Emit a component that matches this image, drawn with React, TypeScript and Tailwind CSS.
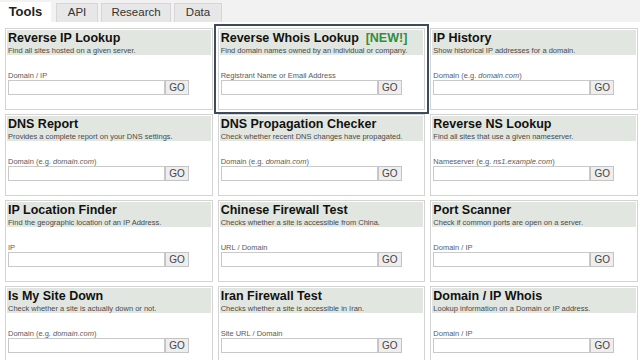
import React from 'react';

type Tool = {
  title: string;
  isNew?: boolean;
  desc: string;
  label: React.ReactNode;
  highlight?: boolean;
};

const eg = (v: string) => (
  <>
    (e.g. <i>{v}</i>)
  </>
);

const tools: Tool[] = [
  { title: 'Reverse IP Lookup', desc: 'Find all sites hosted on a given server.', label: 'Domain / IP' },
  {
    title: 'Reverse Whois Lookup',
    isNew: true,
    highlight: true,
    desc: 'Find domain names owned by an individual or company.',
    label: 'Registrant Name or Email Address',
  },
  { title: 'IP History', desc: 'Show historical IP addresses for a domain.', label: <>Domain {eg('domain.com')}</> },
  { title: 'DNS Report', desc: 'Provides a complete report on your DNS settings.', label: <>Domain {eg('domain.com')}</> },
  {
    title: 'DNS Propagation Checker',
    desc: 'Check whether recent DNS changes have propagated.',
    label: <>Domain {eg('domain.com')}</>,
  },
  {
    title: 'Reverse NS Lookup',
    desc: 'Find all sites that use a given nameserver.',
    label: <>Nameserver {eg('ns1.example.com')}</>,
  },
  { title: 'IP Location Finder', desc: 'Find the geographic location of an IP Address.', label: 'IP' },
  { title: 'Chinese Firewall Test', desc: 'Checks whether a site is accessible from China.', label: 'URL / Domain' },
  { title: 'Port Scanner', desc: 'Check if common ports are open on a server.', label: 'Domain / IP' },
  { title: 'Is My Site Down', desc: 'Check whether a site is actually down or not.', label: <>Domain {eg('domain.com')}</> },
  { title: 'Iran Firewall Test', desc: 'Checks whether a site is accessible in Iran.', label: 'Site URL / Domain' },
  { title: 'Domain / IP Whois', desc: 'Lookup information on a Domain or IP address.', label: 'Domain / IP' },
];

function ToolCard({ tool }: { tool: Tool }) {
  return (
    <div
      className={
        'h-[82px] border border-[#d3d3d3] bg-white p-px ' +
        (tool.highlight ? 'outline-2 outline-offset-2 outline-[#3d4b5b]' : '')
      }
    >
      {/* header band */}
      <div className="h-[25px] bg-[#e2e6e0] px-px pt-[1px]">
        <div className="flex items-baseline text-[12.5px] font-bold leading-[15px] text-[#111]">
          <span>{tool.title}</span>
          {tool.isNew && <span className="ml-auto mr-[15px] text-[#2f8f3f]">[NEW!]</span>}
        </div>
        <div className="text-[7.5px] leading-[9px] text-[#4a4a4a] whitespace-nowrap">{tool.desc}</div>
      </div>

      <div className="mt-[16px] px-px">
        <div className="text-[7.5px] leading-[9px] text-[#5a5a5a] whitespace-nowrap">{tool.label}</div>
        <div className="flex">
          <input className="h-[15px] w-[157px] border border-[#c9c9c9] bg-white outline-none" />
          <button className="h-[15px] w-[24px] border border-[#c4c4c4] bg-[#eeeeee] text-[10px] leading-[13px] text-[#444]">
            GO
          </button>
        </div>
      </div>
    </div>
  );
}

export default function App() {
  const tabs = [
    { name: 'API', w: 'w-[42px]' },
    { name: 'Research', w: 'w-[70px]' },
    { name: 'Data', w: 'w-[48px]' },
  ];

  return (
    <div className="h-[360px] w-[640px] overflow-hidden bg-white font-['Liberation_Sans',Arial,sans-serif]">
      {/* Tabs */}
      <div className="flex h-[22px] items-end gap-[3px] bg-[#f2f2f2]">
        <div className="mr-[2px] flex h-[20px] w-[51px] items-center justify-center bg-white text-[13px] font-bold text-[#222]">
          Tools
        </div>
        {tabs.map((t) => (
          <div
            key={t.name}
            className={`flex h-[19px] ${t.w} items-center justify-center border border-b-0 border-[#d6d6d6] bg-[#e7e7e7] text-[11.5px] text-[#333]`}
          >
            {t.name}
          </div>
        ))}
      </div>

      {/* Tool grid */}
      <div className="grid grid-cols-3 gap-x-[5px] gap-y-[4px] pl-[5px] pr-[2px] pt-[6px]">
        {tools.map((tool) => (
          <ToolCard key={tool.title} tool={tool} />
        ))}
      </div>
    </div>
  );
}
